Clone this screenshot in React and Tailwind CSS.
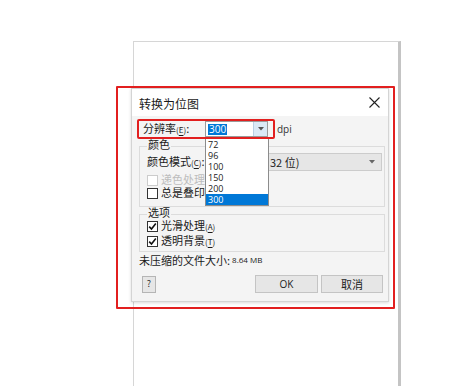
import React from 'react';

const cjk = { fontFamily: '"Noto Sans CJK SC", "Noto Sans", sans-serif' };

function Key({ k }) {
  return (
    <span className="text-[8px] align-middle">
      (<span className="underline">{k}</span>)
    </span>
  );
}

function CheckBox({ checked, disabled, children }) {
  return (
    <div className="flex items-center h-[12px]">
      <div
        className={`w-[11px] h-[11px] shrink-0 border bg-white flex items-center justify-center ${
          disabled ? 'border-[#cccccc]' : 'border-[#333333]'
        }`}
      >
        {checked && (
          <svg width="9" height="9" viewBox="0 0 9 9">
            <path d="M1.2 4.6 L3.5 7 L7.8 1.6" fill="none" stroke="#111" strokeWidth="1.6" />
          </svg>
        )}
      </div>
      <span className={`ml-[3px] text-[11px] leading-none whitespace-nowrap ${disabled ? 'text-[#bdbdbd]' : 'text-[#1a1a1a]'}`}>
        {children}
      </span>
    </div>
  );
}

function Group({ label, className, children }) {
  return (
    <div className={`relative border border-[#dcdcdc] ${className}`}>
      <span className="absolute -top-[8px] left-[7px] text-[11px] leading-none px-[1px] bg-[#f4f4f4] text-[#1a1a1a]">
        {label}
      </span>
      {children}
    </div>
  );
}

const sizes = ['72', '96', '100', '150', '200', '300'];

export default function App() {
  return (
    <div className="relative w-[474px] h-[386px] bg-white overflow-hidden" style={cjk}>
      {/* page sheet */}
      <div className="pt-[41px] pl-[133px]">
        <div className="w-[268px] h-[345px] bg-white border-l border-t border-[#d6d6d6] border-r-[3px] border-r-[#c4c4c4]" />
      </div>

      {/* dialog window */}
      <div className="absolute left-[131px] top-[88px] w-[258px] h-[214px] bg-[#f4f4f4] border border-[#d4d4d4] shadow-[0_1px_3px_rgba(0,0,0,0.15)]">
        <div className="h-[27px] bg-white flex items-center justify-between pl-[7px] pr-[8px]">
          <span className="text-[12px] text-[#1a1a1a] mt-[2px]">转换为位图</span>
          <svg width="11" height="11" viewBox="0 0 11 11">
            <path d="M0.5 0.5 L10.5 10.5 M10.5 0.5 L0.5 10.5" stroke="#222" strokeWidth="1.1" />
          </svg>
        </div>

        <div className="pt-[5px] pl-[7px] pr-[3px]">
          {/* resolution */}
          <div className="flex items-center h-[16px]">
            <span className="w-[66px] pl-[4px] text-[11px] leading-none text-[#1a1a1a]">
              分辨率<Key k="E" />:
            </span>
            <div className="w-[63px] h-[16px] border border-[#9a9a9a] bg-white flex items-center">
              <span className="ml-[2px] px-[1px] text-[10px] leading-[11px] bg-[#0078d7] text-white" style={{ fontFamily: '"Open Sans", sans-serif' }}>
                300
              </span>
              <div className="ml-auto w-[14px] h-full bg-[#dbe9f6] border-l border-[#b9cfe4] flex items-center justify-center">
                <svg width="6" height="4" viewBox="0 0 6 4">
                  <path d="M0 0 L6 0 L3 3.5 Z" fill="#555" />
                </svg>
              </div>
            </div>
            <span className="ml-[9px] text-[10px] text-[#333]" style={{ fontFamily: '"Open Sans", sans-serif' }}>dpi</span>
          </div>

          {/* colour group */}
          <Group label="颜色" className="mt-[9px] h-[61px] pt-[6px] pl-[7px] pr-[2px]">
            <div className="flex items-center h-[18px]">
              <span className="w-[59px] text-[11px] leading-none text-[#1a1a1a]">
                颜色模式<Key k="C" />:
              </span>
              <div className="flex-1 h-[18px] border border-[#cccccc] bg-[#e6e6e6] flex items-center pl-[63px] pr-[6px]">
                <span className="text-[11px] leading-none text-[#222]">32 位)</span>
                <svg className="ml-auto" width="6" height="4" viewBox="0 0 6 4">
                  <path d="M0 0 L6 0 L3 3.5 Z" fill="#666" />
                </svg>
              </div>
            </div>
            <div className="mt-[3px] w-[59px] overflow-hidden">
              <CheckBox disabled>递色处理的<Key k="D" /></CheckBox>
            </div>
            <div className="mt-[1px] w-[59px] overflow-hidden">
              <CheckBox>总是叠印黑色<Key k="V" /></CheckBox>
            </div>
          </Group>

          {/* options group */}
          <Group label="选项" className="mt-[7px] h-[38px] pt-[5px] pl-[7px]">
            <CheckBox checked>光滑处理<Key k="A" /></CheckBox>
            <div className="mt-[3px]">
              <CheckBox checked>透明背景<Key k="T" /></CheckBox>
            </div>
          </Group>

          <div className="mt-[1px] h-[14px] flex items-center text-[11px] text-[#1a1a1a]">
            未压缩的文件大小:
            <span className="ml-[2px] text-[8px]" style={{ fontFamily: '"Open Sans", sans-serif' }}>8.64 MB</span>
          </div>

          <div className="mt-[8px] flex items-center pl-[3px] pr-[2px]">
            <div className="w-[14px] h-[17px] border border-[#b5b5b5] bg-[#e6e6e6] flex items-center justify-center text-[9px] text-[#333]">?</div>
            <div className="ml-auto w-[63px] h-[18px] border border-[#c4c4c4] bg-[#e6e6e6] flex items-center justify-center text-[10px] text-[#222]" style={{ fontFamily: '"Open Sans", sans-serif' }}>
              OK
            </div>
            <div className="ml-[3px] w-[62px] h-[18px] border border-[#c4c4c4] bg-[#e6e6e6] flex items-center justify-center text-[11px] text-[#222]">
              取消
            </div>
          </div>
        </div>

        {/* open drop-down list */}
        <div className="absolute left-[73px] top-[49px] w-[64px] h-[68px] bg-white border border-[#8c8c8c]" style={{ fontFamily: '"Open Sans", sans-serif' }}>
          {sizes.map((s) => (
            <div
              key={s}
              className={`h-[11px] leading-[11px] pl-[2px] text-[9px] ${
                s === '300' ? 'bg-[#0078d7] text-white' : 'text-[#222]'
              }`}
            >
              {s}
            </div>
          ))}
        </div>
      </div>

      {/* red annotations */}
      <div className="absolute left-[116px] top-[86px] w-[279px] h-[223px] border-2 border-[#e21f1f] rounded-[1px] pointer-events-none" />
      <div className="absolute left-[137px] top-[119px] w-[138px] h-[20px] border-2 border-[#e21f1f] rounded-[2px] pointer-events-none" />
    </div>
  );
}
